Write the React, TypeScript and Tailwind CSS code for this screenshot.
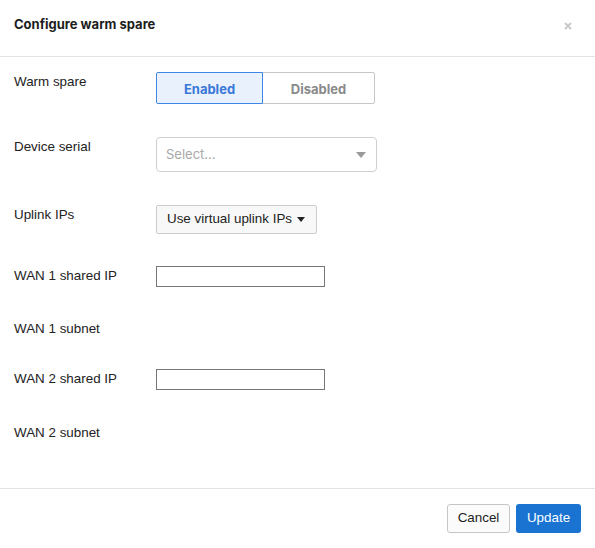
import React from "react";

const arial = { fontFamily: '"Liberation Sans", Arial, sans-serif' };

function Row({ label, h, children }: { label: string; h: string; children?: React.ReactNode }) {
  return (
    <div className={`flex ${h}`}>
      <div className="w-[142px] pt-[1.5px] text-[13.4px] leading-[16px] text-[#222]" style={arial}>
        {label}
      </div>
      <div>{children}</div>
    </div>
  );
}

export default function App() {
  return (
    <div className="w-[595px] h-[548px] bg-white flex flex-col font-['Inter',sans-serif]">
      <div className="h-[57px] border-b border-[#e3e3e3] flex items-start justify-between px-[14px] pt-[15px] shrink-0">
        <div className="text-[13px] leading-[18px] font-bold text-[#1d1d1d]">Configure warm spare</div>
        <svg width="8" height="8" viewBox="0 0 8 8" className="mt-[7px] mr-[9px]">
          <path d="M1 1L7 7M7 1L1 7" stroke="#c9c9c9" strokeWidth="2" />
        </svg>
      </div>
      <div className="flex-1 px-[14px] pt-[15px]">
        <Row label="Warm spare" h="h-[65px]">
          <div className="flex h-[32px] text-[13px] leading-[16px] font-bold">
            <div className="w-[107px] flex items-center justify-center pt-[1px] bg-[#e9f1fd] border border-[#3f86e8] rounded-l-[2px] text-[#3a78d8] relative z-10">
              Enabled
            </div>
            <div className="w-[113px] -ml-[1px] flex items-center justify-center pt-[1px] border border-[#c7c7c7] rounded-r-[2px] text-[#8a8a8a]">
              Disabled
            </div>
          </div>
        </Row>
        <Row label="Device serial" h="h-[68px]">
          <div className="w-[221px] h-[35px] border border-[#cfcfcf] rounded-[4px] flex items-center justify-between pl-[9px] pr-[10px]">
            <span className="text-[13px] text-[#a8a8a8]">Select...</span>
            <svg width="10" height="6" viewBox="0 0 10 6">
              <path d="M0 0H10L5 6Z" fill="#9a9a9a" />
            </svg>
          </div>
        </Row>
        <Row label="Uplink IPs" h="h-[61px]">
          <div
            className="w-[161px] h-[29px] border border-[#cccccc] rounded-[2px] bg-[#f8f8f8] flex items-center pl-[10px] gap-[5px] text-[13.4px] text-[#222]"
            style={arial}
          >
            <span>Use virtual uplink IPs</span>
            <svg width="8" height="5" viewBox="0 0 8 5">
              <path d="M0 0H8L4 5Z" fill="#222" />
            </svg>
          </div>
        </Row>
        <Row label="WAN 1 shared IP" h="h-[53px]">
          <div className="w-[169px] h-[21px] border border-[#767676]" />
        </Row>
        <Row label="WAN 1 subnet" h="h-[50px]" />
        <Row label="WAN 2 shared IP" h="h-[54px]">
          <div className="w-[169px] h-[21px] border border-[#767676]" />
        </Row>
        <Row label="WAN 2 subnet" h="h-[40px]" />
      </div>
      <div className="h-[60px] border-t border-[#e3e3e3] flex items-start justify-end gap-[6px] pr-[14px] pt-[15px] shrink-0" style={arial}>
        <div className="w-[63px] h-[29px] border border-[#c6c6c6] rounded-[3px] bg-[#fbfbfb] flex items-center justify-center text-[13.4px] text-[#222]">
          Cancel
        </div>
        <div className="w-[65px] h-[29px] rounded-[3px] bg-[#1a73d1] flex items-center justify-center text-[13.4px] text-white">
          Update
        </div>
      </div>
    </div>
  );
}
